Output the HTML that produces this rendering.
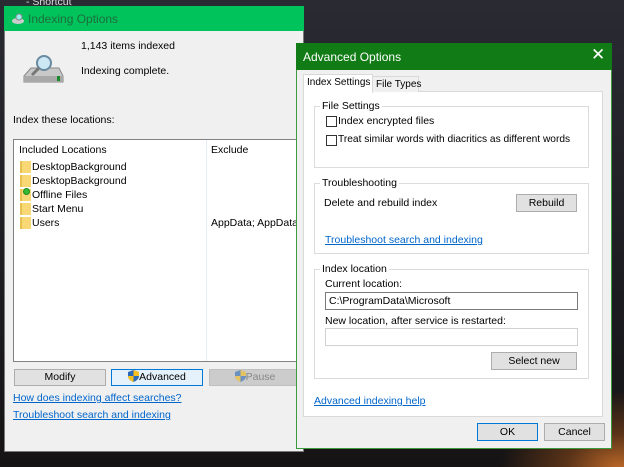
<!DOCTYPE html>
<html><head><style>
*{box-sizing:border-box;margin:0;padding:0}
body{width:624px;height:467px;overflow:hidden;position:relative;font-family:"Liberation Sans",sans-serif;font-size:10.5px;color:#000;
background:radial-gradient(ellipse 120px 80px at 620px 470px,#c06a28 0%,#5a3318 45%,transparent 100%),linear-gradient(#2a2a33,#1b1a1e 70%,#151313);}
.a{position:absolute;white-space:nowrap}
.lnk{color:#0066cc;text-decoration:underline}
.btn{position:absolute;background:#e1e1e1;border:1px solid #adadad;text-align:center;line-height:16px}
.grp{position:absolute;border:1px solid #dcdcdc}
.gl{position:absolute;top:-7px;left:5px;background:#fff;padding:0 2px}
.cb{position:absolute;width:11px;height:11px;border:1px solid #333;background:#fff}
.fold{position:absolute;width:11px;height:12px;background:#f8d775;border-left:2px solid #e8c050}
</style></head><body>
<div class="a" style="left:26px;top:-4px;color:#ddd">- Shortcut</div>
<div class="a" style="left:4px;top:6px;width:300px;height:446px;background:#f0f0f0;border:1px solid #7a7a7a;border-top:none"></div>
<div class="a" style="left:4px;top:6px;width:300px;height:25px;background:#00c35c"></div>
<svg class="a" style="left:11px;top:13px" width="14" height="12"><ellipse cx="7" cy="8" rx="6" ry="3" fill="#ccc"/><circle cx="8" cy="4" r="3" fill="#9ee" stroke="#888"/></svg>
<div class="a" style="left:28px;top:12px;color:#1d6e3c;font-size:12px">Indexing Options</div>
<svg class="a" style="left:21px;top:54px" width="44" height="32"><path d="M3 22 L10 14 H38 L42 22 V28 H3Z" fill="#c8c8c8" stroke="#888"/><rect x="3" y="22" width="39" height="6" fill="#a8a8a8"/><rect x="36" y="22" width="3" height="5" fill="#1a8a2a"/><circle cx="23" cy="9" r="7" fill="#cde8f5" stroke="#6a8aa0" stroke-width="2"/><line x1="18" y1="14" x2="11" y2="21" stroke="#777" stroke-width="3"/></svg>
<div class="a" style="left:81px;top:40px">1,143 items indexed</div>
<div class="a" style="left:81px;top:65px">Indexing complete.</div>
<div class="a" style="left:13px;top:114px">Index these locations:</div>
<div class="a" style="left:13px;top:139px;width:290px;height:223px;background:#fff;border:1px solid #828282"></div>
<div class="a" style="left:206px;top:140px;width:1px;height:221px;background:#e5eef8"></div>
<div class="a" style="left:19px;top:144px">Included Locations</div>
<div class="a" style="left:211px;top:144px">Exclude</div>
<div class="fold" style="left:20px;top:161px"></div><div class="a" style="left:32px;top:161px">DesktopBackground</div>
<div class="fold" style="left:20px;top:175px"></div><div class="a" style="left:32px;top:175px">DesktopBackground</div>
<div class="fold" style="left:20px;top:189px"></div><div class="a" style="left:23px;top:188px;width:7px;height:7px;border-radius:50%;background:#3b3;border:1px solid #282"></div><div class="a" style="left:32px;top:189px">Offline Files</div>
<div class="fold" style="left:20px;top:203px"></div><div class="a" style="left:32px;top:203px">Start Menu</div>
<div class="fold" style="left:20px;top:217px"></div><div class="a" style="left:32px;top:217px">Users</div>
<div class="a" style="left:211px;top:217px">AppData; AppData</div>
<div class="btn" style="left:14px;top:369px;width:92px;height:17px;line-height:15px">Modify</div>
<div class="btn" style="left:111px;top:369px;width:92px;height:17px;line-height:15px;background:#e5f1fb;border-color:#0078d7"><svg width="11" height="12" style="vertical-align:-2px"><path d="M5.5 0 L11 2 V6 C11 9 8 11 5.5 12 C3 11 0 9 0 6 V2Z" fill="#2a6ab8"/><path d="M5.5 0 V6 H11 V2Z M0 6 H5.5 V12 C3 11 0 9 0 6Z" fill="#f5c020"/></svg>Advanced</div>
<div class="btn" style="left:209px;top:369px;width:92px;height:17px;line-height:15px;background:#ccc;border-color:#bfbfbf;color:#888"><svg width="11" height="12" style="vertical-align:-2px;opacity:.6"><path d="M5.5 0 L11 2 V6 C11 9 8 11 5.5 12 C3 11 0 9 0 6 V2Z" fill="#2a6ab8"/><path d="M5.5 0 V6 H11 V2Z M0 6 H5.5 V12 C3 11 0 9 0 6Z" fill="#f5c020"/></svg>Pause</div>
<div class="a lnk" style="left:13px;top:392px">How does indexing affect searches?</div>
<div class="a lnk" style="left:13px;top:409px">Troubleshoot search and indexing</div>
<div class="a" style="left:296px;top:43px;width:316px;height:406px;background:#f0f0f0;border:1px solid #3c9a3c"></div>
<div class="a" style="left:296px;top:43px;width:316px;height:27px;background:#117c16"></div>
<div class="a" style="left:303px;top:50px;color:#fff;font-size:12px">Advanced Options</div>
<div class="a" style="left:591px;top:45px;color:#fff;font-size:17px">✕</div>
<div class="a" style="left:303px;top:91px;width:300px;height:326px;background:#fff;border:1px solid #d9d9d9"></div>
<div class="a" style="left:372px;top:76px;width:47px;height:16px;background:#f0f0f0;border:1px solid #d9d9d9;border-bottom:none;padding:2px 0 0 3px;font-size:10px">File Types</div>
<div class="a" style="left:303px;top:74px;width:70px;height:19px;background:#fff;border:1px solid #d9d9d9;border-bottom:none;padding:2px 0 0 3px;font-size:10px">Index Settings</div>
<div class="grp" style="left:314px;top:106px;width:275px;height:62px"><span class="gl">File Settings</span></div>
<div class="cb" style="left:326px;top:116px"></div><div class="a" style="left:338px;top:115px">Index encrypted files</div>
<div class="cb" style="left:326px;top:135px"></div><div class="a" style="left:338px;top:134px;font-size:10.2px">Treat similar words with diacritics as different words</div>
<div class="grp" style="left:314px;top:183px;width:275px;height:71px"><span class="gl">Troubleshooting</span></div>
<div class="a" style="left:324px;top:197px">Delete and rebuild index</div>
<div class="btn" style="left:516px;top:194px;width:61px;height:18px">Rebuild</div>
<div class="a lnk" style="left:325px;top:234px">Troubleshoot search and indexing</div>
<div class="grp" style="left:314px;top:269px;width:275px;height:110px"><span class="gl">Index location</span></div>
<div class="a" style="left:325px;top:278px">Current location:</div>
<div class="a" style="left:325px;top:292px;width:253px;height:18px;border:1px solid #7a7a7a;padding:2px 0 0 3px">C:\ProgramData\Microsoft</div>
<div class="a" style="left:325px;top:315px">New location, after service is restarted:</div>
<div class="a" style="left:325px;top:328px;width:253px;height:18px;border:1px solid #d0d0d0"></div>
<div class="btn" style="left:491px;top:352px;width:86px;height:18px">Select new</div>
<div class="a lnk" style="left:314px;top:395px">Advanced indexing help</div>
<div class="btn" style="left:477px;top:423px;width:61px;height:18px;border-color:#0078d7">OK</div>
<div class="btn" style="left:544px;top:423px;width:61px;height:18px">Cancel</div>
</body></html>
